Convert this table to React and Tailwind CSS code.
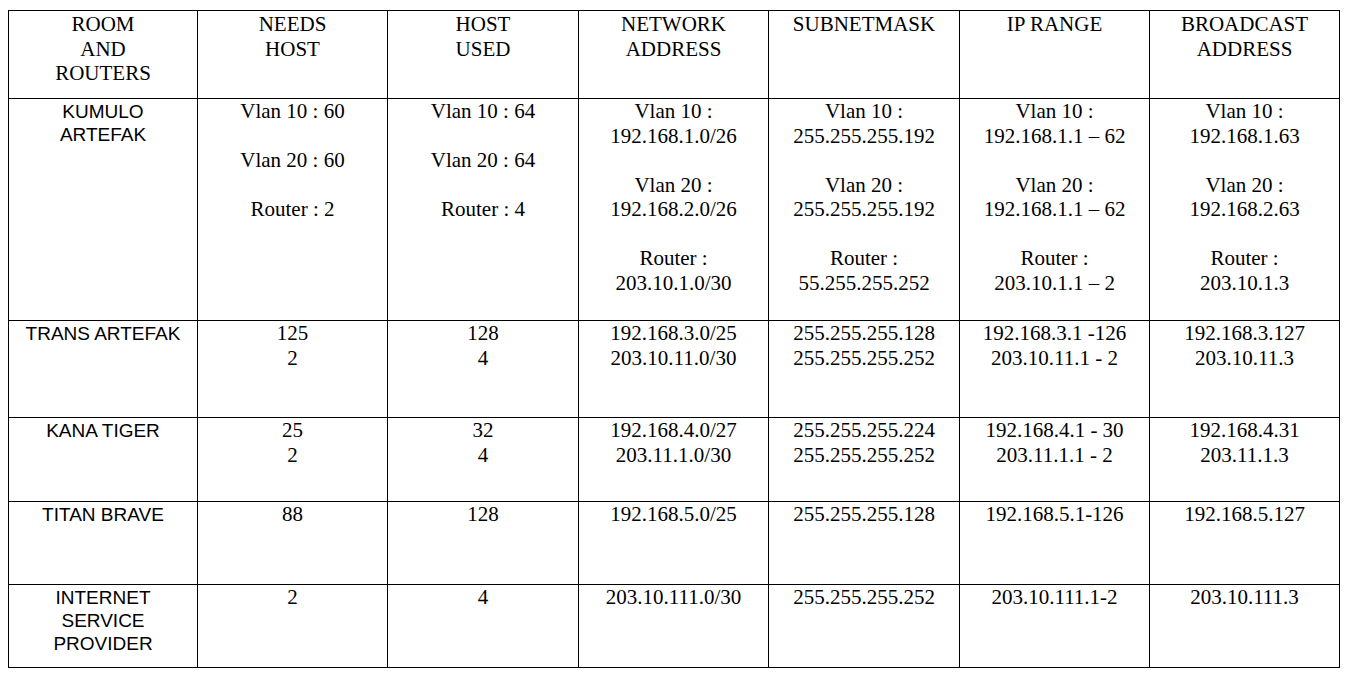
import React from "react";

const serif = { fontFamily: '"Liberation Serif", "Times New Roman", serif' };
const sans = { fontFamily: '"Liberation Sans", Arial, sans-serif' };

const headers = [
  ["ROOM", "AND", "ROUTERS"],
  ["NEEDS", "HOST"],
  ["HOST", "USED"],
  ["NETWORK", "ADDRESS"],
  ["SUBNETMASK"],
  ["IP RANGE"],
  ["BROADCAST", "ADDRESS"],
];

// each cell is a list of lines, "" means an empty line
const rows = [
  {
    h: "h-[222px]",
    name: ["KUMULO", "ARTEFAK"],
    cells: [
      ["Vlan 10 : 60", "", "Vlan 20 : 60", "", "Router : 2"],
      ["Vlan 10 : 64", "", "Vlan 20 : 64", "", "Router : 4"],
      ["Vlan 10 :", "192.168.1.0/26", "", "Vlan 20 :", "192.168.2.0/26", "", "Router :", "203.10.1.0/30"],
      ["Vlan 10 :", "255.255.255.192", "", "Vlan 20 :", "255.255.255.192", "", "Router :", "55.255.255.252"],
      ["Vlan 10 :", "192.168.1.1 – 62", "", "Vlan 20 :", "192.168.1.1 – 62", "", "Router :", "203.10.1.1 – 2"],
      ["Vlan 10 :", "192.168.1.63", "", "Vlan 20 :", "192.168.2.63", "", "Router :", "203.10.1.3"],
    ],
  },
  {
    h: "h-[97px]",
    name: ["TRANS ARTEFAK"],
    cells: [
      ["125", "2"],
      ["128", "4"],
      ["192.168.3.0/25", "203.10.11.0/30"],
      ["255.255.255.128", "255.255.255.252"],
      ["192.168.3.1 -126", "203.10.11.1 - 2"],
      ["192.168.3.127", "203.10.11.3"],
    ],
  },
  {
    h: "h-[84px]",
    name: ["KANA TIGER"],
    cells: [
      ["25", "2"],
      ["32", "4"],
      ["192.168.4.0/27", "203.11.1.0/30"],
      ["255.255.255.224", "255.255.255.252"],
      ["192.168.4.1 - 30", "203.11.1.1 - 2"],
      ["192.168.4.31", "203.11.1.3"],
    ],
  },
  {
    h: "h-[83px]",
    name: ["TITAN BRAVE"],
    cells: [["88"], ["128"], ["192.168.5.0/25"], ["255.255.255.128"], ["192.168.5.1-126"], ["192.168.5.127"]],
  },
  {
    h: "h-[83px]",
    name: ["INTERNET", "SERVICE", "PROVIDER"],
    cells: [["2"], ["4"], ["203.10.111.0/30"], ["255.255.255.252"], ["203.10.111.1-2"], ["203.10.111.3"]],
  },
];

function Lines({ lines }) {
  return lines.map((l, i) => (
    <div key={i} className="whitespace-nowrap">
      {l === "" ? "\u00a0" : l}
    </div>
  ));
}

export default function App() {
  return (
    <div className="min-h-screen bg-white pl-[8px] pt-[10px] text-black">
      <table className="table-fixed border-collapse w-[1331px]">
        <colgroup>
          <col className="w-[189px]" />
          <col className="w-[190px]" />
          <col className="w-[191px]" />
          <col className="w-[190px]" />
          <col className="w-[191px]" />
          <col className="w-[190px]" />
          <col className="w-[190px]" />
        </colgroup>
        <thead>
          <tr className="h-[88px]">
            {headers.map((h, i) => (
              <th
                key={i}
                style={serif}
                className="border border-black align-top text-center font-normal text-[21px] leading-[24.5px] pt-[1px] px-1"
              >
                <Lines lines={h} />
              </th>
            ))}
          </tr>
        </thead>
        <tbody>
          {rows.map((r, i) => (
            <tr key={i} className={r.h}>
              <td
                style={sans}
                className="border border-black align-top text-center text-[19px] leading-[23px] pt-[1px] px-1"
              >
                <Lines lines={r.name} />
              </td>
              {r.cells.map((c, j) => (
                <td
                  key={j}
                  style={serif}
                  className="border border-black align-top text-center text-[21px] leading-[24.5px] pt-0 px-1"
                >
                  <Lines lines={c} />
                </td>
              ))}
            </tr>
          ))}
        </tbody>
      </table>
    </div>
  );
}
